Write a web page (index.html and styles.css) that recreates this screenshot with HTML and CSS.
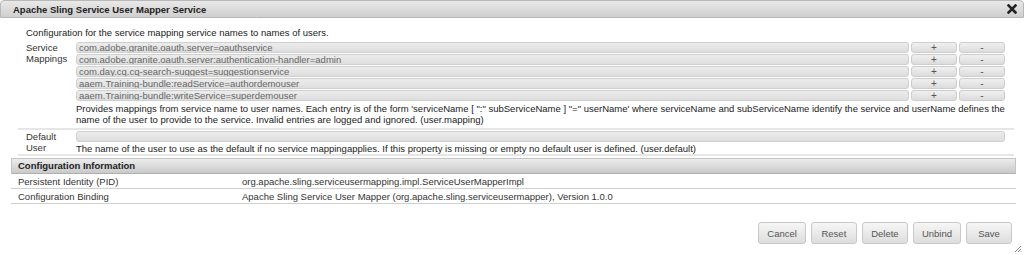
FILE: index.html
```html
<!DOCTYPE html>
<html>
<head>
<meta charset="utf-8">
<link rel="stylesheet" href="styles.css">
</head>
<body>
<div class="dialog">
  <div class="titlebar">
    <span class="title">Apache Sling Service User Mapper Service</span>
    <svg class="close" width="10" height="10" viewBox="0 0 10 10"><path d="M1.5 1.5 L8.5 8.5 M8.5 1.5 L1.5 8.5" stroke="#222" stroke-width="2.6" stroke-linecap="square"/></svg>
  </div>
  <div class="body">
    <p class="intro">Configuration for the service mapping service names to names of users.</p>
    <table class="props">
      <tr class="prop">
        <td class="plabel">Service<br>Mappings</td>
        <td class="pval">
          <div class="mrow"><div class="field">com.adobe.granite.oauth.server=oauthservice</div><button class="pm">+</button><button class="pm">-</button></div>
          <div class="mrow"><div class="field">com.adobe.granite.oauth.server:authentication-handler=admin</div><button class="pm">+</button><button class="pm">-</button></div>
          <div class="mrow"><div class="field">com.day.cq.cq-search-suggest=suggestionservice</div><button class="pm">+</button><button class="pm">-</button></div>
          <div class="mrow"><div class="field">aaem.Training-bundle:readService=authordemouser</div><button class="pm">+</button><button class="pm">-</button></div>
          <div class="mrow"><div class="field">aaem.Training-bundle:writeService=superdemouser</div><button class="pm">+</button><button class="pm">-</button></div>
          <div class="help">Provides mappings from service name to user names. Each entry is of the form 'serviceName [ ":" subServiceName ] "=" userName' where serviceName and subServiceName identify the service and userName defines the name of the user to provide to the service. Invalid entries are logged and ignored. (user.mapping)</div>
        </td>
      </tr>
      <tr class="prop">
        <td class="plabel">Default<br>User</td>
        <td class="pval">
          <div class="field wide"></div>
          <div class="help last">The name of the user to use as the default if no service mappingapplies. If this property is missing or empty no default user is defined. (user.default)</div>
        </td>
      </tr>
    </table>
    <div class="infohead">Configuration Information</div>
    <div class="info">
      <div class="irow"><span class="ilabel">Persistent Identity (PID)</span><span class="ival">org.apache.sling.serviceusermapping.impl.ServiceUserMapperImpl</span></div>
      <div class="irow"><span class="ilabel">Configuration Binding</span><span class="ival">Apache Sling Service User Mapper (org.apache.sling.serviceusermapper), Version 1.0.0</span></div>
    </div>
  </div>
  <div class="buttons">
    <button class="btn">Cancel</button>
    <button class="btn">Reset</button>
    <button class="btn">Delete</button>
    <button class="btn">Unbind</button>
    <button class="btn">Save</button>
  </div>
  <svg class="grip" width="8" height="8" viewBox="0 0 8 8"><path d="M7 1 L1 7 M7 4 L4 7 M7 6.5 L6.5 7" stroke="#888" stroke-width="1"/></svg>
</div>
</body>
</html>
```
FILE: styles.css
```css
* { box-sizing: border-box; }
html, body { margin: 0; padding: 0; background: #fff; }
body { font-family: "Liberation Sans", Arial, sans-serif; font-size: 9.5px; color: #222; width: 1024px; height: 255px; overflow: hidden; }
.dialog { position: relative; height: 255px; }
.titlebar {
  height: 18px;
  display: flex; align-items: center; justify-content: space-between;
  padding: 0 6px 0 12px;
  background: linear-gradient(#e9e9e9, #cfcfcf);
  border: 1px solid #b8b8b8;
  border-radius: 4px 4px 0 0;
}
.title { font-weight: bold; color: #222; }
.close { display: block; }
.body { padding: 9px 8px 0 8px; }
.intro { margin: 0 0 3px 18px; line-height: 12px; }
.props { border-collapse: collapse; margin-left: 10px; width: 996px; }
.prop td { vertical-align: top; padding: 0; border-bottom: 2px solid #e6e6e6; }
.prop + .prop td { padding-top: 1px; }
.plabel { width: 58px; padding-left: 8px !important; line-height: 11px; color: #333; }
.pval { padding-right: 9px !important; }
.mrow { display: flex; gap: 2px; height: 12px; }
.field {
  flex: 1; height: 11px; line-height: 10px;
  background: linear-gradient(#ececec, #dedede);
  border: 1px solid #cfcfcf; border-radius: 3px;
  color: #666; padding: 0 2px; overflow: hidden; white-space: nowrap;
}
.field.wide { flex: none; width: 100%; height: 11px; }
.pm {
  width: 46px; height: 11px; padding: 0; margin: 0;
  font: 10px "Liberation Sans", Arial, sans-serif; line-height: 9px; color: #555;
  background: linear-gradient(#f0f0f0, #dcdcdc);
  border: 1px solid #cdcdcd; border-radius: 3px;
}
.help { line-height: 11px; color: #222; padding: 1px 0 3px 0; }
.help.last { padding-bottom: 0; }
.infohead {
  margin: 2px 0 0 3px; height: 16px; line-height: 14px;
  padding-left: 6px; font-weight: bold; color: #222;
  background: linear-gradient(#ececec, #c9c9c9);
  border: 1px solid #c4c4c4; border-bottom-color: #b0b0b0;
}
.info { margin-left: 3px; }
.irow { display: flex; align-items: center; height: 15px; border-bottom: 1px solid #d0d0d0; color: #333; }
.ilabel { width: 231px; padding-left: 7px; }
.buttons { display: flex; justify-content: flex-end; gap: 5px; padding: 18px 12px 0 0; }
.btn {
  height: 22px; min-width: 46px; padding: 0 8px; margin: 0;
  font: 9.5px "Liberation Sans", Arial, sans-serif; color: #555;
  background: linear-gradient(#f6f6f6, #dddddd);
  border: 1px solid #c8c8c8; border-radius: 3px;
}
.grip { position: absolute; right: 2px; bottom: 2px; }
```
